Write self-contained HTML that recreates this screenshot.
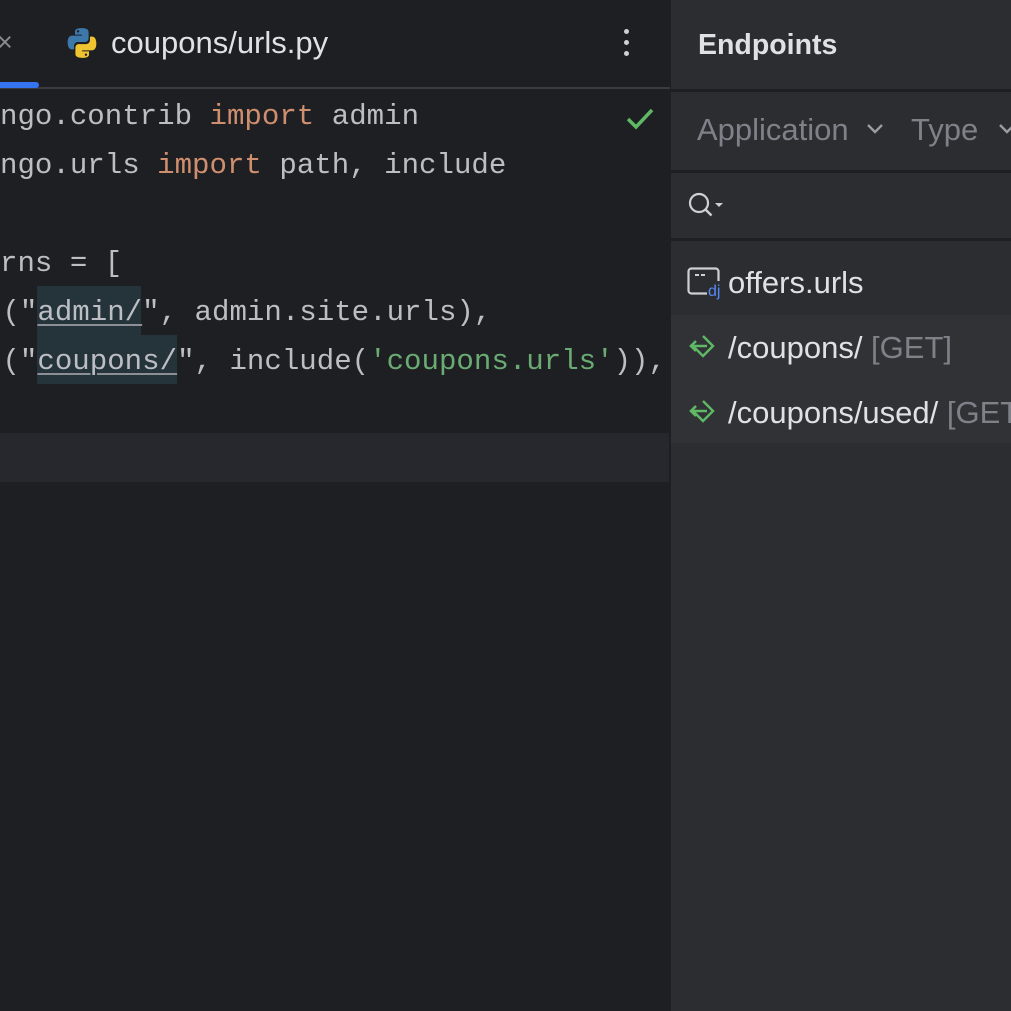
<!DOCTYPE html>
<html><head><meta charset="utf-8"><style>
*{margin:0;padding:0;box-sizing:border-box}
body{width:1011px;height:1011px;overflow:hidden;background:#1e1f22;position:relative;font-family:"Liberation Sans",sans-serif}
.ed{position:absolute;left:0;top:0;width:670px;height:1011px;background:#1e1f22}
.tabline{position:absolute;left:0;top:87px;width:670px;height:2px;background:#393b40}
.tabblue{position:absolute;left:0;top:82px;width:39px;height:6px;background:#3574f0;border-radius:0 3px 3px 0}
.code{position:absolute;left:0;font-family:"Liberation Mono",monospace;font-size:29.1px;color:#bcbec4;white-space:pre;line-height:49px;height:49px}
.kw{color:#cf8e6d}.str{color:#6aab73}
.u{text-decoration:underline;text-decoration-color:#8c8f94;text-underline-offset:4px;text-decoration-thickness:2px}
.pn{position:absolute;left:670px;top:0;width:341px;height:1011px;background:#2b2d30;border-left:1px solid #1e1f22}
.hl{position:absolute;left:0;width:341px;background:#313236}
.sep{position:absolute;left:0;width:341px;height:3px;background:#1e1f22}
.pt{position:absolute;color:#dfe1e5;font-size:31px;white-space:nowrap}
</style></head><body>
<div class="ed">
  <div style="position:absolute;left:0;top:433px;width:669px;height:49px;background:#26282e"></div>
  <div style="position:absolute;left:37px;top:286px;width:104px;height:49px;background:#25343b"></div>
  <div style="position:absolute;left:37px;top:335px;width:140px;height:49px;background:#25343b"></div>
  <div style="position:absolute;left:-3px;top:27px;color:#868a91;font-size:27px">×</div>
  <svg style="position:absolute;left:65px;top:26px" width="34" height="34" viewBox="0 0 32 32">
    <path d="M15.8 2c-6.8 0-6.4 3-6.4 3v3.1h6.5v1H6.8S2.5 8.6 2.5 15.4s3.8 6.6 3.8 6.6h2.2v-3.2s-.1-3.8 3.7-3.8h6.4s3.6.1 3.6-3.5V5.6S22.7 2 15.8 2z" fill="#3c78aa"/>
    <path d="M16.2 30c6.8 0 6.4-3 6.4-3v-3.1h-6.5v-1h9.1s4.3.5 4.300-6.3-3.8-6.6-3.8-6.6h-2.2v3.2s.1 3.8-3.7 3.8h-6.4s-3.6-.1-3.6 3.5v5.9S9.3 30 16.2 30z" fill="#f0c330"/>
    <circle cx="12.3" cy="5" r="1.1" fill="#1e1f22"/><circle cx="19.7" cy="27" r="1.1" fill="#1e1f22"/>
  </svg>
  <div style="position:absolute;left:111px;top:25px;color:#dfe1e5;font-size:31px">coupons/urls.py</div>
  <div style="position:absolute;left:624px;top:29px;width:5px;height:5px;border-radius:50%;background:#ced0d6;box-shadow:0 11px 0 #ced0d6,0 22px 0 #ced0d6"></div>
  <div class="tabline"></div><div class="tabblue"></div>
  <svg style="position:absolute;left:625px;top:106px" width="30" height="26" viewBox="0 0 30 26"><path d="M3 13l8 8L27 4" stroke="#5fb865" stroke-width="3.5" fill="none"/></svg>
  <div class="code" style="top:92px">ngo.contrib <span class="kw">import</span> admin</div>
  <div class="code" style="top:141px">ngo.urls <span class="kw">import</span> path, include</div>
  <div class="code" style="top:239px">rns = [</div>
  <div class="code" style="top:288px;left:-15px">h("<span class="u">admin/</span>", admin.site.urls),</div>
  <div class="code" style="top:337px;left:-15px">h("<span class="u">coupons/</span>", include(<span class="str">'coupons.urls'</span>)),</div>
</div>
<div class="pn">
  <div class="pt" style="left:27px;top:29px;font-weight:bold;font-size:28.5px">Endpoints</div>
  <div class="sep" style="top:89px"></div>
  <div class="pt" style="left:26px;top:112px;color:#7e8188">Application</div>
  <svg style="position:absolute;left:194px;top:122px" width="20" height="14"><path d="M3 3l7 7 7-7" stroke="#9a9da3" stroke-width="2.4" fill="none"/></svg>
  <div class="pt" style="left:240px;top:112px;color:#7e8188">Type</div>
  <svg style="position:absolute;left:326px;top:122px" width="20" height="14"><path d="M3 3l7 7 7-7" stroke="#9a9da3" stroke-width="2.4" fill="none"/></svg>
  <div class="sep" style="top:170px"></div>
  <svg style="position:absolute;left:16px;top:191px" width="40" height="30"><circle cx="12" cy="12" r="9" stroke="#ced0d6" stroke-width="2.2" fill="none"/><path d="M18.5 18.5l6 6" stroke="#ced0d6" stroke-width="2.4"/><path d="M28 12h8l-4 4z" fill="#ced0d6"/></svg>
  <div class="sep" style="top:238px"></div>
  <svg style="position:absolute;left:16px;top:267px" width="40" height="34"><rect x="1.5" y="1.5" width="30" height="25" rx="3" stroke="#ced0d6" stroke-width="2.2" fill="none"/><path d="M8 8h4M14 8h4" stroke="#ced0d6" stroke-width="2"/><rect x="20" y="14" width="20" height="20" fill="#2b2d30"/><text x="21" y="29" font-size="16" fill="#548af7" font-family="Liberation Sans">dj</text></svg>
  <div class="pt" style="left:57px;top:265px">offers.urls</div>
  <div class="hl" style="top:315px;height:128px"></div>
  <svg style="position:absolute;left:18px;top:333px" width="32" height="26"><path d="M14 3l10 10-10 10-10-10" stroke="#5fb865" stroke-width="2.4" fill="none" stroke-linejoin="miter"/><path d="M2 13h16M7 8l-5 5 5 5" stroke="#5fb865" stroke-width="2.6" fill="none"/></svg>
  <div class="pt" style="left:57px;top:330px">/coupons/ <span style="color:#7e8188">[GET]</span></div>
  <svg style="position:absolute;left:18px;top:398px" width="32" height="26"><path d="M14 3l10 10-10 10-10-10" stroke="#5fb865" stroke-width="2.4" fill="none"/><path d="M2 13h16M7 8l-5 5 5 5" stroke="#5fb865" stroke-width="2.6" fill="none"/></svg>
  <div class="pt" style="left:57px;top:395px">/coupons/used/ <span style="color:#7e8188">[GET]</span></div>
</div>
</body></html>
